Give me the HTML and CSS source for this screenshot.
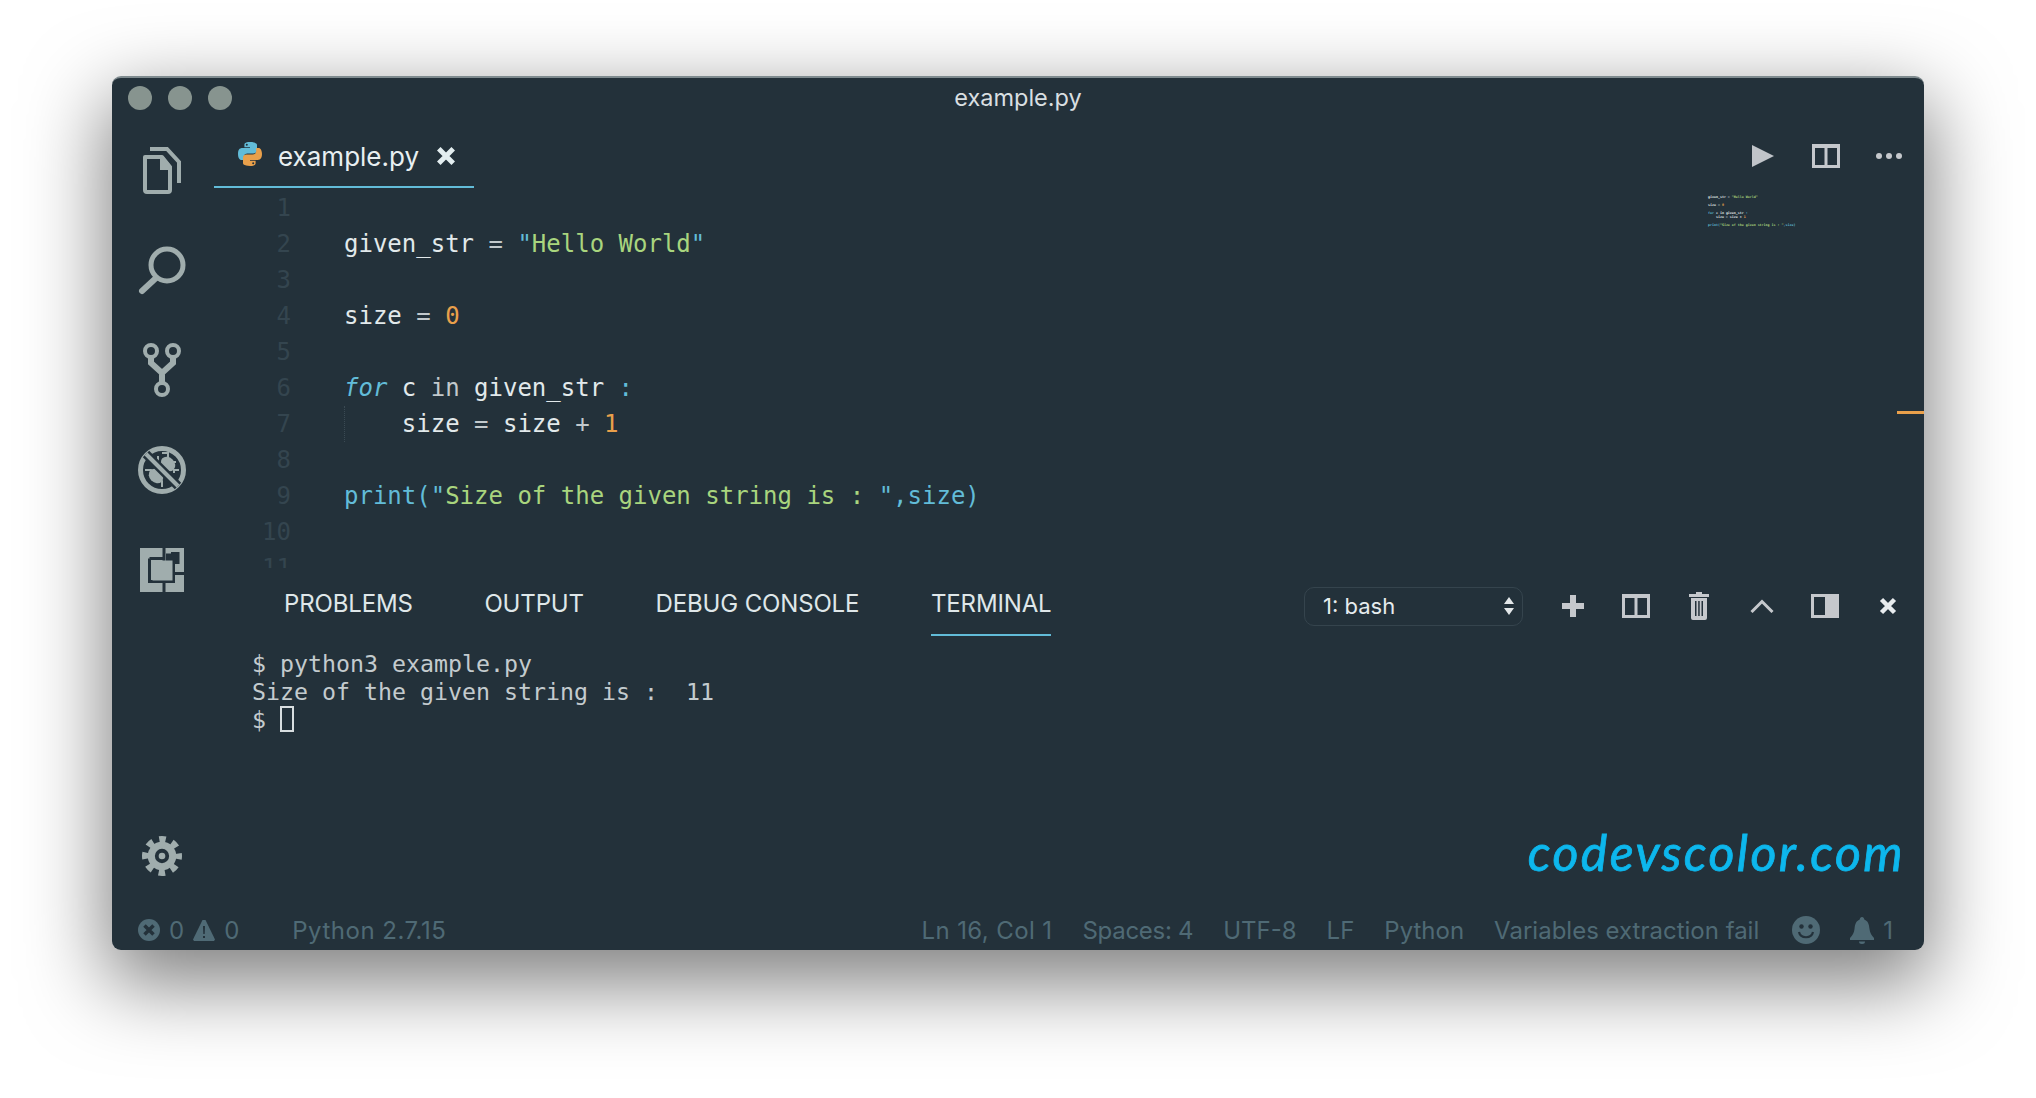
FILE: index.html
```html
<!DOCTYPE html>
<html lang="en">
<head>
<meta charset="utf-8">
<title>example.py</title>
<link rel="stylesheet" href="styles.css">
</head>
<body>
<div class="window">
  <header class="titlebar">
    <div class="lights"><span class="light"></span><span class="light"></span><span class="light"></span></div>
    <div class="title">example.py</div>
  </header>
  <div class="main">
    <nav class="activity">
      <div class="act-item">
        <svg width="40" height="47" viewBox="0 0 40 47"><path d="M3 10h17l8 10v23a2 2 0 0 1-2 2H5a2 2 0 0 1-2-2z" fill="none" stroke="#a0adad" stroke-width="4" stroke-linejoin="round"/><path d="M18 9h3l9 11v3H18z" fill="#a0adad"/><path d="M8 2h17l12 13v21" fill="none" stroke="#a0adad" stroke-width="4"/></svg>
      </div>
      <div class="act-item">
        <svg width="50" height="50" viewBox="0 0 50 50"><circle cx="30" cy="20" r="16" fill="none" stroke="#a0adad" stroke-width="5"/><path d="M19 33 5 46" stroke="#a0adad" stroke-width="6" stroke-linecap="round"/></svg>
      </div>
      <div class="act-item">
        <svg width="40" height="54" viewBox="0 0 40 54"><g fill="none" stroke="#a0adad"><circle cx="9" cy="8" r="6" stroke-width="4"/><circle cx="31" cy="8" r="6" stroke-width="4"/><circle cx="20" cy="46" r="6" stroke-width="4"/><path d="M9 14v6l11 10 11-10v-6M20 30v10" stroke-width="6"/></g></svg>
      </div>
      <div class="act-item">
        <svg width="48" height="48" viewBox="0 0 48 48"><circle cx="24" cy="24" r="21.500" fill="none" stroke="#a0adad" stroke-width="5"/><ellipse cx="18" cy="30" rx="6.500" ry="8" transform="rotate(-45 18 30)" fill="#a0adad"/><ellipse cx="30" cy="18" rx="6.500" ry="8" transform="rotate(-45 30 18)" fill="#a0adad"/><path d="M7 24h6l3 2M24 41v-6l-2-3M24 7h6v6M41 24h-5v3M20 10v5M38 16h-4" fill="none" stroke="#a0adad" stroke-width="2"/><path d="M8 8l32 32" stroke="#23313a" stroke-width="9"/><path d="M8 8l32 32" stroke="#a0adad" stroke-width="4"/></svg>
      </div>
      <div class="act-item">
        <svg width="44" height="44" viewBox="0 0 44 44"><rect width="44" height="44" fill="#a0adad"/><path d="M24 0v9M9.500 10.500h14.500v4h14v-9h-7M9.500 10.500v23h14.500v10.500M24 33.500h9.500v-8h10.500M33.500 25.500v-11" fill="none" stroke="#23313a" stroke-width="3"/><path d="M26 5.500h11v8H26z" fill="#23313a"/><rect x="12.500" y="12.500" width="20" height="20" fill="#a0adad"/></svg>
      </div>
      <div class="act-item act-gear">
        <svg width="40" height="40" viewBox="0 0 42 42"><circle cx="21" cy="21" r="15" fill="#a0adad"/><circle cx="21" cy="21" r="17.500" fill="none" stroke="#a0adad" stroke-width="7" stroke-dasharray="6.870 6.870" stroke-dashoffset="3.430"/><circle cx="21" cy="21" r="5.500" fill="#a0adad" stroke="#23313a" stroke-width="4"/></svg>
      </div>
    </nav>
    <div class="content">
      <div class="tabbar">
        <div class="tab">
          <svg class="py-icon" width="24" height="24" viewBox="0 0 24 24"><path d="M11.900 0C6 0 6.400 2.600 6.400 2.600V5.300H12V6.100H4.200S0 5.600 0 11.900C0 18.200 3.700 18 3.700 18H5.800V15S5.700 11.400 9.400 11.400H15.600S19 11.500 19 8.100V3S19.500 0 11.900 0ZM8.800 1.800A1 1 0 1 1 8.800 3.800 1 1 0 0 1 8.800 1.800Z" fill="#62bcd8" fill-rule="evenodd"/><path d="M12.100 24C18 24 17.600 21.400 17.600 21.400V18.700H12V17.900H19.800S24 18.400 24 12.100C24 5.800 20.300 6 20.300 6H18.200V9S18.300 12.600 14.600 12.600H8.400S5 12.500 5 15.900V21S4.500 24 12.100 24ZM15.200 22.200A1 1 0 1 1 15.200 20.200 1 1 0 0 1 15.200 22.200Z" fill="#e9a04b" fill-rule="evenodd"/></svg>
          <span class="tab-label">example.py</span>
          <svg class="tab-close" width="20" height="20" viewBox="0 0 18 18"><path d="M2.500 2.500l13 13M15.500 2.500l-13 13" stroke="#e3eef0" stroke-width="4.500"/></svg>
        </div>
        <div class="actions">
          <div class="action"><svg width="24" height="24" viewBox="0 0 24 24"><path d="M1 1 23 12 1 23z" fill="#c0c4c9"/></svg></div>
          <div class="action"><svg width="28" height="24" viewBox="0 0 28 24"><path d="M1.500 1.500h25v21h-25zM14 1.500v21" fill="none" stroke="#c5c8cc" stroke-width="3"/><path d="M0 0h28v4H0z" fill="#c5c8cc"/></svg></div>
          <div class="action"><svg width="26" height="6" viewBox="0 0 26 6"><circle cx="3" cy="3" r="3" fill="#c5c8cc"/><circle cx="13" cy="3" r="3" fill="#c5c8cc"/><circle cx="23" cy="3" r="3" fill="#c5c8cc"/></svg></div>
        </div>
      </div>
      <div class="editor">
        <div class="minimap">
          <div class="mini-line"></div>
          <div class="mini-line">given_str = <span class="str">"Hello World"</span></div>
          <div class="mini-line"></div>
          <div class="mini-line">size = <span class="num">0</span></div>
          <div class="mini-line"></div>
          <div class="mini-line"><span class="kw">for</span> c in given_str <span class="kw">:</span></div>
          <div class="mini-line">    size = size + <span class="num">1</span></div>
          <div class="mini-line"></div>
          <div class="mini-line"><span class="kw">print(</span><span class="str">"Size of the given string is : "</span><span class="kw">,size)</span></div>
        </div>
        <div class="ruler-mark"></div>
        <div class="line"><span class="ln">1</span><span class="code"></span></div>
        <div class="line"><span class="ln">2</span><span class="code">given_str <span class="op">=</span> <span class="kw">"</span><span class="str">Hello World</span><span class="kw">"</span></span></div>
        <div class="line"><span class="ln">3</span><span class="code"></span></div>
        <div class="line"><span class="ln">4</span><span class="code">size <span class="op">=</span> <span class="num">0</span></span></div>
        <div class="line"><span class="ln">5</span><span class="code"></span></div>
        <div class="line"><span class="ln">6</span><span class="code"><em class="kw">for</em> c <span class="op">in</span> given_str <span class="kw">:</span></span></div>
        <div class="line"><span class="ln">7</span><span class="code code-indent"><span class="guide"></span>    size <span class="op">=</span> size <span class="op">+</span> <span class="num">1</span></span></div>
        <div class="line"><span class="ln">8</span><span class="code"></span></div>
        <div class="line"><span class="ln">9</span><span class="code"><span class="kw">print("</span><span class="str">Size of the given string is : </span><span class="kw">",size)</span></span></div>
        <div class="line"><span class="ln">10</span><span class="code"></span></div>
        <div class="line"><span class="ln">11</span><span class="code"></span></div>
      </div>
      <div class="panel">
        <div class="panel-head">
          <div class="panel-tabs">
            <span class="ptab">PROBLEMS</span>
            <span class="ptab">OUTPUT</span>
            <span class="ptab">DEBUG CONSOLE</span>
            <span class="ptab ptab-active">TERMINAL</span>
          </div>
          <div class="panel-tools">
            <div class="select"><span>1: bash</span><svg width="12" height="20" viewBox="0 0 12 20"><path d="M6 1l5 7H1zM6 19l5-7H1z" fill="#e3e7e9"/></svg></div>
            <div class="actions">
              <div class="action"><svg width="22" height="22" viewBox="0 0 22 22"><path d="M8 0h6v8h8v6h-8v8H8v-8H0V8h8z" fill="#c5c8cc"/></svg></div>
              <div class="action"><svg width="28" height="24" viewBox="0 0 28 24"><path d="M1.500 1.500h25v21h-25zM14 1.500v21" fill="none" stroke="#c5c8cc" stroke-width="3"/><path d="M0 0h28v4H0z" fill="#c5c8cc"/></svg></div>
              <div class="action"><svg width="20" height="28" viewBox="0 0 20 28"><path d="M7 0h6v2h7v3H0V2h7zM2 6h16v20a2 2 0 0 1-2 2H4a2 2 0 0 1-2-2zM6 9v15h1.500V9zM9.200 9v15h1.500V9zM12.500 9v15H14V9z" fill="#c5c8cc" fill-rule="evenodd"/></svg></div>
              <div class="action"><svg width="24" height="14" viewBox="0 0 24 14"><path d="M1.500 13 12 2.500 22.500 13" fill="none" stroke="#c5c8cc" stroke-width="3"/></svg></div>
              <div class="action"><svg width="28" height="24" viewBox="0 0 28 24"><path d="M1.500 1.500h25v21h-25z" fill="none" stroke="#c5c8cc" stroke-width="3"/><path d="M14 0h14v24H14z" fill="#c5c8cc"/></svg></div>
              <div class="action"><svg width="18" height="18" viewBox="0 0 18 18"><path d="M2.500 2.500l13 13M15.500 2.500l-13 13" stroke="#e8ecee" stroke-width="4.500"/></svg></div>
            </div>
          </div>
        </div>
        <div class="terminal">
          <div class="tline">$ python3 example.py</div>
          <div class="tline">Size of the given string is :  11</div>
          <div class="tline">$ <span class="cursor"></span></div>
        </div>
      </div>
    </div>
  </div>
  <footer class="status">
    <div class="status-left">
      <span class="st-group">
        <svg width="22" height="22" viewBox="0 0 22 22"><circle cx="11" cy="11" r="11" fill="#4f6a75"/><path d="M6.500 6.500l9 9M15.500 6.500l-9 9" stroke="#23313a" stroke-width="3.500"/></svg>
        <span>0</span>
        <svg class="st-warn" width="22" height="22" viewBox="0 0 22 22"><path d="M9.500 1h3L22 20.500 21 22H1L0 20.500z" fill="#4f6a75"/><path d="M10 7h2l-.300 8h-1.400zM10 17h2v2h-2z" fill="#23313a"/></svg>
        <span>0</span>
      </span>
      <span class="st-python">Python 2.7.15</span>
    </div>
    <div class="status-right">
      <span class="st-ln">Ln 16, Col 1</span>
      <span class="st-spaces">Spaces: 4</span>
      <span>UTF-8</span>
      <span>LF</span>
      <span>Python</span>
      <span>Variables extraction fail</span>
      <svg class="st-smile" width="28" height="28" viewBox="0 0 28 28"><circle cx="14" cy="14" r="14" fill="#4f6a75"/><circle cx="9.500" cy="10.500" r="2.200" fill="#23313a"/><circle cx="18.500" cy="10.500" r="2.200" fill="#23313a"/><path d="M7 16c1.500 7 12.500 7 14 0" fill="none" stroke="#23313a" stroke-width="2.200"/></svg>
      <span class="st-bell"><svg width="24" height="27" viewBox="0 0 24 27"><path d="M12 0c1.500 0 2 1 2.300 2.500C18 4 19 7 19.500 12c.5 4 2 6 4.500 9v2H0v-2c2.500-3 4-5 4.500-9C5 7 6 4 9.700 2.500 10 1 10.500 0 12 0zM9 24.500h6a3 2.500 0 0 1-6 0z" fill="#4f6a75"/></svg><span>1</span></span>
    </div>
  </footer>
  <div class="watermark">codevscolor.com</div>
</div>
</body>
</html>
```

FILE: styles.css
```css
* { box-sizing: border-box; }
html, body { margin: 0; height: 100%; background: #fff; overflow: hidden; }
body { padding: 76px 112px 148px; font-family: Inter, Roboto, sans-serif; }

.window {
  position: relative;
  display: flex;
  flex-direction: column;
  height: 874px;
  background: #23313a;
  border-radius: 9px;
  border-top: 2px solid #7f8b8f;
  box-shadow: 0 28px 80px 6px rgba(0, 0, 0, .5);
}

.titlebar {
  position: relative;
  display: flex;
  align-items: center;
  justify-content: center;
  flex: 0 0 42px;
}
.lights { position: absolute; left: 16px; top: 8px; display: flex; gap: 16px; }
.light { width: 24px; height: 24px; border-radius: 50%; background: #87948f; }
.title { font-size: 23.500px; color: #d9dfe1; margin-top: -4px; }

.main { flex: 1; display: flex; min-height: 0; }

.activity { flex: 0 0 102px; display: flex; flex-direction: column; padding-right: 2px; padding-bottom: 4px; }
.act-item { height: 100px; display: flex; align-items: center; justify-content: center; flex: 0 0 100px; }
.act-gear { margin-top: auto; }

.content { flex: 1; display: flex; flex-direction: column; min-width: 0; }

.tabbar { flex: 0 0 70px; min-height: 0; display: flex; justify-content: space-between; align-items: flex-start; padding-right: 4px; }
.tab {
  width: 260px;
  height: 68px;
  display: flex;
  align-items: center;
  border-bottom: 2px solid #62bcd8;
  padding: 6px 0 0 24px;
}
.py-icon { margin-top: -5px; }
.tab-label { font-size: 26px; color: #e8eff1; margin-left: 16px; }
.tab-close { margin-left: 17px; }

.actions { display: flex; align-items: center; }
.action { width: 63px; height: 48px; display: flex; align-items: center; justify-content: center; }
.tabbar .action { height: 72px; }

.editor {
  position: relative;
  flex: 0 0 378px;
  overflow: hidden;
  font-family: "DejaVu Sans Mono", monospace;
  font-size: 24px;
  color: #e2e9eb;
}
.line { display: flex; height: 36px; line-height: 36px; white-space: pre; }
.ln { flex: 0 0 77px; text-align: right; color: #34454f; }
.code { padding-left: 53px; position: relative; }
.guide { position: absolute; left: 53px; top: 0; height: 36px; border-left: 1px dotted #3a4a53; }
.kw { color: #62bcd8; }
.str { color: #a9d57e; }
.num { color: #e9a04b; }
.op { color: #c2c9cc; }
em.kw { font-style: italic; }

.minimap {
  position: absolute;
  left: 1494px;
  top: 1px;
  font-size: 3.300px;
  font-weight: 700;
  color: #e2e9eb;
}
.mini-line { height: 4px; line-height: 4px; white-space: pre; }
.ruler-mark { position: absolute; right: 0; top: 221px; width: 27px; height: 3px; background: #e9a04b; }

.panel { flex: 1; display: flex; flex-direction: column; min-height: 0; }
.panel-head { flex: 0 0 68px; display: flex; justify-content: space-between; align-items: flex-start; padding: 0 5px 0 70px; }
.panel-tabs { display: flex; gap: 71.700px; height: 68px; }
.ptab { height: 68px; line-height: 72px; font-size: 24px; color: #dfe7e9; letter-spacing: -.15px; }
.ptab-active { border-bottom: 2px solid #62bcd8; }
.panel-tools { display: flex; align-items: center; gap: 18px; padding-top: 14px; }
.select {
  width: 219px;
  height: 39px;
  display: flex;
  align-items: center;
  justify-content: space-between;
  padding: 0 7px 0 18px;
  border: 1px solid #35444d;
  border-radius: 10px;
  font-size: 22px;
  color: #e6ecee;
}

.terminal {
  flex: 1;
  padding: 13px 0 0 38px;
  font-family: "DejaVu Sans Mono", monospace;
  font-size: 23.250px;
  color: #c3cbce;
}
.tline { height: 28px; display: flex; align-items: center; white-space: pre; }
.cursor { display: inline-block; width: 14px; height: 26px; border: 2px solid #d8dee0; }

.status {
  flex: 0 0 40px;
  display: flex;
  justify-content: space-between;
  align-items: center;
  padding: 0 31px 0 26px;
  font-size: 24px;
  color: #4f6a75;
}
.status-left, .status-right, .st-group, .st-bell { display: flex; align-items: center; }
.st-group { gap: 9px; }
.st-warn { margin-left: 0; }
.st-python { margin-left: 53px; letter-spacing: .5px; }
.status-right { gap: 30px; }
.st-ln { letter-spacing: .4px; }
.st-spaces { letter-spacing: -.3px; }
.st-smile { margin-left: 3px; }
.st-bell { gap: 9px; }

.watermark {
  position: absolute;
  right: 19px;
  top: 744px;
  font-family: Lato, sans-serif;
  font-style: italic;
  font-weight: 400;
  font-size: 50px;
  line-height: 60px;
  letter-spacing: 2.400px;
  -webkit-text-stroke: .8px #0db7ed;
  color: #0db7ed;
}
```
